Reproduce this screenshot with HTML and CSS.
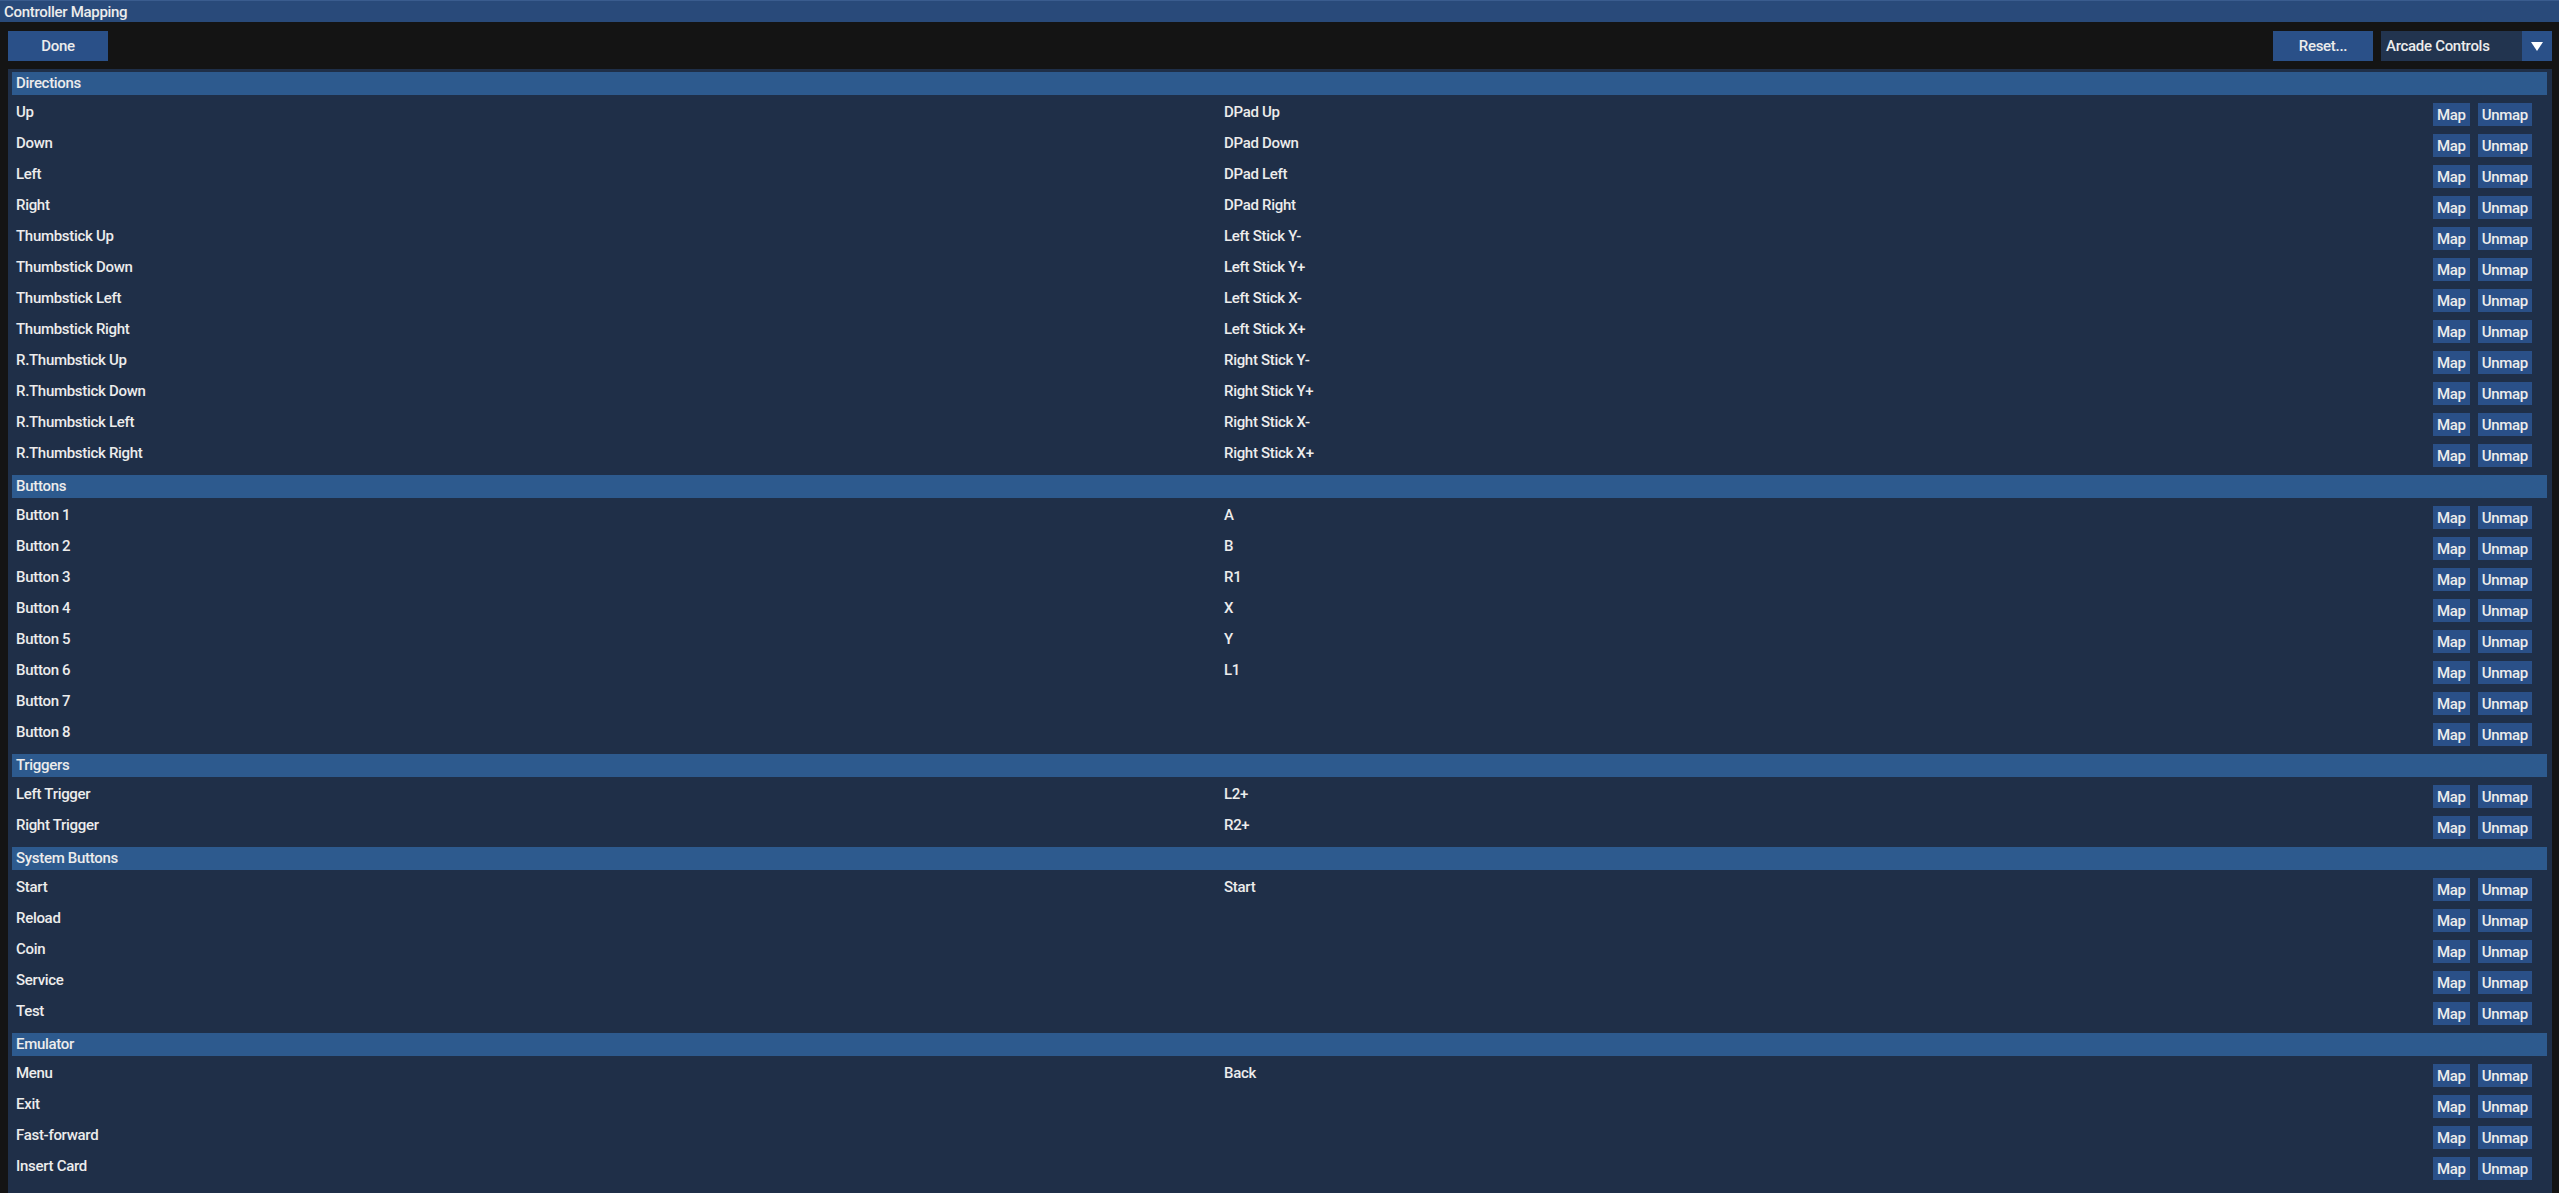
FILE: index.html
```html
<!DOCTYPE html>
<html lang="en">
<head>
    <meta charset="UTF-8">
    <title>Controller Mapping</title>
    <link rel="stylesheet" href="styles.css">
</head>
<body>
    <div class="titlebar">Controller Mapping</div>

    <div class="toolbar">
        <button class="btn btn-wide">Done</button>
        <div class="toolbar-right">
            <button class="btn btn-wide">Reset...</button>
            <div class="combo">
                <span class="combo-label">Arcade Controls</span>
                <span class="combo-arrow">
                    <svg width="14" height="11" viewBox="0 0 14 11"><path d="M1 1 H13 L7 10 Z" fill="#ffffff"/></svg>
                </span>
            </div>
        </div>
    </div>

    <div class="panel">
        <div class="section-header">Directions</div>
        <div class="section">
            <div class="row"><span class="name">Up</span><span class="binding">DPad Up</span><div class="actions"><button class="btn btn-small">Map</button><button class="btn btn-small">Unmap</button></div></div>
            <div class="row"><span class="name">Down</span><span class="binding">DPad Down</span><div class="actions"><button class="btn btn-small">Map</button><button class="btn btn-small">Unmap</button></div></div>
            <div class="row"><span class="name">Left</span><span class="binding">DPad Left</span><div class="actions"><button class="btn btn-small">Map</button><button class="btn btn-small">Unmap</button></div></div>
            <div class="row"><span class="name">Right</span><span class="binding">DPad Right</span><div class="actions"><button class="btn btn-small">Map</button><button class="btn btn-small">Unmap</button></div></div>
            <div class="row"><span class="name">Thumbstick Up</span><span class="binding">Left Stick Y-</span><div class="actions"><button class="btn btn-small">Map</button><button class="btn btn-small">Unmap</button></div></div>
            <div class="row"><span class="name">Thumbstick Down</span><span class="binding">Left Stick Y+</span><div class="actions"><button class="btn btn-small">Map</button><button class="btn btn-small">Unmap</button></div></div>
            <div class="row"><span class="name">Thumbstick Left</span><span class="binding">Left Stick X-</span><div class="actions"><button class="btn btn-small">Map</button><button class="btn btn-small">Unmap</button></div></div>
            <div class="row"><span class="name">Thumbstick Right</span><span class="binding">Left Stick X+</span><div class="actions"><button class="btn btn-small">Map</button><button class="btn btn-small">Unmap</button></div></div>
            <div class="row"><span class="name">R.Thumbstick Up</span><span class="binding">Right Stick Y-</span><div class="actions"><button class="btn btn-small">Map</button><button class="btn btn-small">Unmap</button></div></div>
            <div class="row"><span class="name">R.Thumbstick Down</span><span class="binding">Right Stick Y+</span><div class="actions"><button class="btn btn-small">Map</button><button class="btn btn-small">Unmap</button></div></div>
            <div class="row"><span class="name">R.Thumbstick Left</span><span class="binding">Right Stick X-</span><div class="actions"><button class="btn btn-small">Map</button><button class="btn btn-small">Unmap</button></div></div>
            <div class="row"><span class="name">R.Thumbstick Right</span><span class="binding">Right Stick X+</span><div class="actions"><button class="btn btn-small">Map</button><button class="btn btn-small">Unmap</button></div></div>
        </div>

        <div class="section-header">Buttons</div>
        <div class="section">
            <div class="row"><span class="name">Button 1</span><span class="binding">A</span><div class="actions"><button class="btn btn-small">Map</button><button class="btn btn-small">Unmap</button></div></div>
            <div class="row"><span class="name">Button 2</span><span class="binding">B</span><div class="actions"><button class="btn btn-small">Map</button><button class="btn btn-small">Unmap</button></div></div>
            <div class="row"><span class="name">Button 3</span><span class="binding">R1</span><div class="actions"><button class="btn btn-small">Map</button><button class="btn btn-small">Unmap</button></div></div>
            <div class="row"><span class="name">Button 4</span><span class="binding">X</span><div class="actions"><button class="btn btn-small">Map</button><button class="btn btn-small">Unmap</button></div></div>
            <div class="row"><span class="name">Button 5</span><span class="binding">Y</span><div class="actions"><button class="btn btn-small">Map</button><button class="btn btn-small">Unmap</button></div></div>
            <div class="row"><span class="name">Button 6</span><span class="binding">L1</span><div class="actions"><button class="btn btn-small">Map</button><button class="btn btn-small">Unmap</button></div></div>
            <div class="row"><span class="name">Button 7</span><span class="binding"></span><div class="actions"><button class="btn btn-small">Map</button><button class="btn btn-small">Unmap</button></div></div>
            <div class="row"><span class="name">Button 8</span><span class="binding"></span><div class="actions"><button class="btn btn-small">Map</button><button class="btn btn-small">Unmap</button></div></div>
        </div>

        <div class="section-header">Triggers</div>
        <div class="section">
            <div class="row"><span class="name">Left Trigger</span><span class="binding">L2+</span><div class="actions"><button class="btn btn-small">Map</button><button class="btn btn-small">Unmap</button></div></div>
            <div class="row"><span class="name">Right Trigger</span><span class="binding">R2+</span><div class="actions"><button class="btn btn-small">Map</button><button class="btn btn-small">Unmap</button></div></div>
        </div>

        <div class="section-header">System Buttons</div>
        <div class="section">
            <div class="row"><span class="name">Start</span><span class="binding">Start</span><div class="actions"><button class="btn btn-small">Map</button><button class="btn btn-small">Unmap</button></div></div>
            <div class="row"><span class="name">Reload</span><span class="binding"></span><div class="actions"><button class="btn btn-small">Map</button><button class="btn btn-small">Unmap</button></div></div>
            <div class="row"><span class="name">Coin</span><span class="binding"></span><div class="actions"><button class="btn btn-small">Map</button><button class="btn btn-small">Unmap</button></div></div>
            <div class="row"><span class="name">Service</span><span class="binding"></span><div class="actions"><button class="btn btn-small">Map</button><button class="btn btn-small">Unmap</button></div></div>
            <div class="row"><span class="name">Test</span><span class="binding"></span><div class="actions"><button class="btn btn-small">Map</button><button class="btn btn-small">Unmap</button></div></div>
        </div>

        <div class="section-header">Emulator</div>
        <div class="section">
            <div class="row"><span class="name">Menu</span><span class="binding">Back</span><div class="actions"><button class="btn btn-small">Map</button><button class="btn btn-small">Unmap</button></div></div>
            <div class="row"><span class="name">Exit</span><span class="binding"></span><div class="actions"><button class="btn btn-small">Map</button><button class="btn btn-small">Unmap</button></div></div>
            <div class="row"><span class="name">Fast-forward</span><span class="binding"></span><div class="actions"><button class="btn btn-small">Map</button><button class="btn btn-small">Unmap</button></div></div>
            <div class="row"><span class="name">Insert Card</span><span class="binding"></span><div class="actions"><button class="btn btn-small">Map</button><button class="btn btn-small">Unmap</button></div></div>
        </div>
    </div>
</body>
</html>
```

FILE: styles.css
```css
/* --- Base --- */
body {
    margin: 0;
    height: 100vh;
    overflow: hidden;
    background-color: #141414;
    color: #ececec;
    font-family: Roboto, "Liberation Sans", sans-serif;
    font-size: 15px;
    font-weight: 500;
    letter-spacing: -0.3px;
    display: flex;
    flex-direction: column;
}

/* --- Window title --- */
.titlebar {
    height: 22px;
    line-height: 22px;
    padding-left: 4px;
    background-color: #294a7a;
    border-top: 1px solid #3a5c8e;
    box-sizing: border-box;
}

/* --- Top toolbar --- */
.toolbar {
    display: flex;
    justify-content: space-between;
    padding: 9px 7px 8px 8px;
}

.toolbar-right {
    display: flex;
    gap: 8px;
}

.btn {
    font: inherit;
    letter-spacing: inherit;
    color: #ececec;
    background-color: #2a5088;
    border: none;
    padding: 0;
    margin: 0;
    cursor: pointer;
}

.btn-wide { width: 100px; height: 30px; }
.btn-small { height: 23px; padding: 0 4px; }

.combo {
    display: flex;
    width: 171px;
    height: 30px;
    background-color: #22344f;
}

.combo-label {
    flex: 1;
    line-height: 30px;
    padding-left: 5px;
}

.combo-arrow {
    width: 30px;
    display: flex;
    justify-content: center;
    align-items: center;
    background-color: #2a5088;
}

/* --- Mapping list --- */
.panel {
    flex: 1;
    margin: 0 7px 0 8px;
    padding: 3px 5px 0 4px;
    background-color: #1f2f48;
}

.section-header {
    height: 23px;
    line-height: 23px;
    padding-left: 4px;
    background-color: #2d5a8e;
}

.section { padding: 4px 0; }

.row {
    display: grid;
    grid-template-columns: 1208px 1fr auto;
    align-items: start;
    height: 31px;
    padding: 0 15px 0 4px;
}

.name, .binding {
    padding-top: 4px;
    line-height: 19px;
}

.actions {
    display: flex;
    gap: 8px;
    margin-top: 4px;
}
```
